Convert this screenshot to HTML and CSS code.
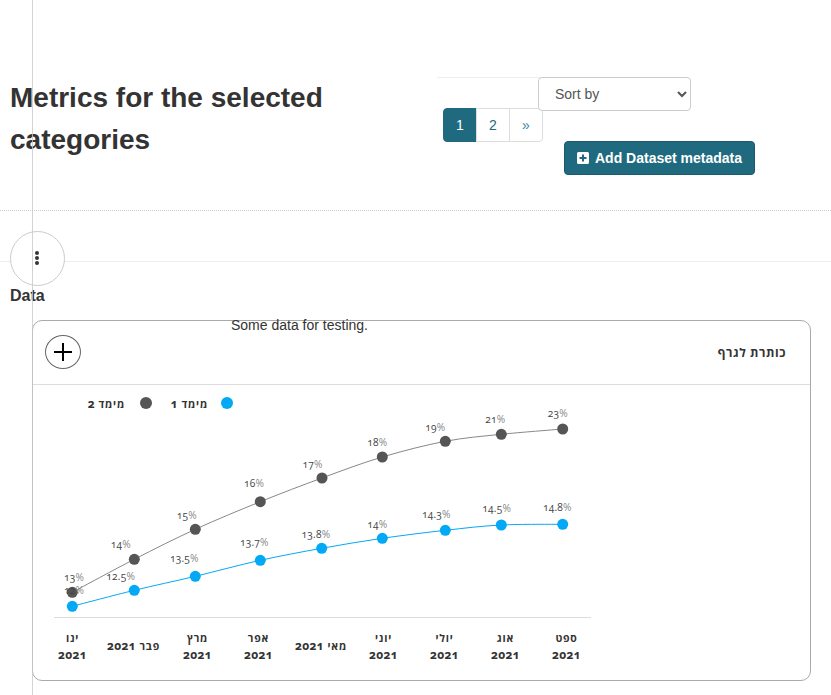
FILE: index.html
```html
<!DOCTYPE html>
<html lang="en">
<head>
<meta charset="utf-8">
<title>Metrics</title>
<link rel="stylesheet" href="styles.css">
</head>
<body>
<div class="guide"></div>
<header class="page-head">
  <h1 class="title">Metrics for the selected categories</h1>
  <div class="controls">
    <hr class="rule">
    <select class="sort"><option>Sort by</option></select>
    <ul class="pager">
      <li class="pager-item active">1</li>
      <li class="pager-item">2</li>
      <li class="pager-item next">»</li>
    </ul>
    <button class="add-btn" type="button">
      <svg class="add-icon" viewBox="0 0 12 12" width="12" height="12"><path fill="#fff" fill-rule="evenodd" d="M1.5 0h9A1.5 1.5 0 0 1 12 1.5v9a1.5 1.5 0 0 1-1.5 1.5h-9A1.5 1.5 0 0 1 0 10.500v-9A1.500 1.500 0 0 1 1.500 0zM5 2.500V5H2.500v2H5v2.500h2V7h2.500V5H7V2.500z"/></svg>
      Add Dataset metadata
    </button>
  </div>
</header>
<section class="content">
  <div class="toolbar">
    <button class="menu-btn" type="button">
      <svg viewBox="0 0 6 16" width="6" height="16"><circle cx="3" cy="3" r="2" fill="#333"/><circle cx="3" cy="8" r="2" fill="#333"/><circle cx="3" cy="13" r="2" fill="#333"/></svg>
    </button>
  </div>
  <div class="data-label">Data</div>
  <p class="data-note">Some data for testing.</p>
  <article class="card">
    <div class="card-head">
      <button class="plus-btn" type="button">
        <svg viewBox="0 0 18 18" width="18" height="18"><path d="M9 0v18M0 9h18" stroke="#000" stroke-width="2" fill="none"/></svg>
      </button>
      <div class="card-title" dir="rtl">כותרת לגרף</div>
    </div>
    <svg class="chart" viewBox="33 385 777 295" width="777" height="295">
      <circle cx="227" cy="403" r="6" class="dot-blue"/>
      <text x="208" y="408" class="legend">מימד <tspan class="yr">1</tspan></text>
      <circle cx="146" cy="403" r="6" class="dot-gray"/>
      <text x="125" y="408" class="legend">מימד <tspan class="yr">2</tspan></text>

      <path class="line-gray" d="M72.300 592.300C82.600 586.800 113.800 569.800 134.300 559.300C154.800 548.800 174.300 538.900 195.300 529.300C216.300 519.700 239.200 510.250 260.300 501.700C281.400 493.150 301.700 485.450 322 478C342.300 470.550 361.750 463.100 382.300 457C402.850 450.900 425.470 445.080 445.300 441.300C465.130 437.520 481.730 436.350 501.300 434.300C520.870 432.250 552.500 429.900 562.700 429"/>
      <path class="line-blue" d="M72.300 606.300C82.600 603.600 113.800 595.300 134.300 590.300C154.800 585.300 174.300 581.300 195.300 576.300C216.300 571.300 239.200 564.930 260.300 560.300C281.400 555.670 301.370 551.970 321.700 548.300C342.030 544.630 361.700 541.300 382.300 538.300C402.900 535.300 425.470 532.520 445.300 530.300C465.130 528.080 481.730 526 501.300 525C521.770 524 552.500 524.400 562.700 524.300"/>

      <g class="dot-gray">
        <circle cx="72.300" cy="592.300" r="5.500"/><circle cx="134.300" cy="559.300" r="5.500"/><circle cx="195.300" cy="529.300" r="5.500"/><circle cx="260.300" cy="501.700" r="5.500"/><circle cx="322" cy="478" r="5.500"/><circle cx="382.300" cy="457" r="5.500"/><circle cx="445.300" cy="441.300" r="5.500"/><circle cx="501.300" cy="434.300" r="5.500"/><circle cx="562.700" cy="429" r="5.500"/>
      </g>
      <g class="dot-blue">
        <circle cx="72.300" cy="606.300" r="5.500"/><circle cx="134.300" cy="590.300" r="5.500"/><circle cx="195.300" cy="576.300" r="5.500"/><circle cx="260.300" cy="560.300" r="5.500"/><circle cx="321.700" cy="548.300" r="5.500"/><circle cx="382.300" cy="538.300" r="5.500"/><circle cx="445.300" cy="530.300" r="5.500"/><circle cx="501.300" cy="525" r="5.500"/><circle cx="562.700" cy="524.300" r="5.500"/>
      </g>

      <g class="values">
        <text x="74" y="580.500">13<tspan class="pct">%</tspan></text>
        <text x="74" y="594">12<tspan class="pct">%</tspan></text>
        <text x="120.700" y="547.500">14<tspan class="pct">%</tspan></text>
        <text x="186.700" y="518.500">15<tspan class="pct">%</tspan></text>
        <text x="254" y="487">16<tspan class="pct">%</tspan></text>
        <text x="312.500" y="468">17<tspan class="pct">%</tspan></text>
        <text x="377.300" y="446">18<tspan class="pct">%</tspan></text>
        <text x="435.300" y="430.500">19<tspan class="pct">%</tspan></text>
        <text x="495.300" y="423">21<tspan class="pct">%</tspan></text>
        <text x="557.700" y="417">23<tspan class="pct">%</tspan></text>
        <text x="120.700" y="580">12.5<tspan class="pct">%</tspan></text>
        <text x="184.300" y="561.500">13.5<tspan class="pct">%</tspan></text>
        <text x="254.300" y="545.500">13.7<tspan class="pct">%</tspan></text>
        <text x="316" y="538">13.8<tspan class="pct">%</tspan></text>
        <text x="377.300" y="527.500">14<tspan class="pct">%</tspan></text>
        <text x="436.300" y="517.500">14.3<tspan class="pct">%</tspan></text>
        <text x="496.700" y="511.500">14.5<tspan class="pct">%</tspan></text>
        <text x="557.300" y="511">14.8<tspan class="pct">%</tspan></text>
      </g>

      <line class="axis" x1="54" y1="617.500" x2="591" y2="617.500"/>

      <g class="ticks">
        <text x="72.500" y="642">ינו</text><text x="72.500" y="659" class="yr">2021</text>
        <text x="133.500" y="650">פבר <tspan class="yr">2021</tspan></text>
        <text x="197.500" y="642">מרץ</text><text x="197.500" y="659" class="yr">2021</text>
        <text x="258.500" y="642">אפר</text><text x="258.500" y="659" class="yr">2021</text>
        <text x="321" y="650">מאי <tspan class="yr">2021</tspan></text>
        <text x="383.500" y="642">יוני</text><text x="383.500" y="659" class="yr">2021</text>
        <text x="444.500" y="642">יולי</text><text x="444.500" y="659" class="yr">2021</text>
        <text x="505.500" y="642">אוג</text><text x="505.500" y="659" class="yr">2021</text>
        <text x="566.500" y="642">ספט</text><text x="566.500" y="659" class="yr">2021</text>
      </g>
    </svg>
  </article>
</section>
</body>
</html>
```

FILE: styles.css
```css
* { box-sizing: border-box; }
html, body { margin: 0; padding: 0; }
body {
  position: relative;
  height: 695px;
  overflow: hidden;
  background: #fff;
  color: #333;
  font-family: "Liberation Sans", Arial, sans-serif;
  font-size: 14px;
}
.guide {
  position: absolute;
  top: 0;
  bottom: 0;
  left: 32px;
  width: 1px;
  background: rgba(200, 200, 200, 0.8);
  z-index: 5;
}
.page-head {
  display: flex;
  height: 211px;
  border-bottom: 1px dotted #ccc;
}
.title {
  width: 437px;
  margin: 0;
  padding: 77px 0 0 10px;
  font-size: 28px;
  line-height: 42px;
  font-weight: 700;
  color: #333;
}
.controls {
  display: flex;
  flex-direction: column;
  align-items: flex-start;
  padding-top: 77px;
}
.rule {
  width: 110px;
  height: 1px;
  margin: 0 0 -1px;
  border: 0;
  background: #eee;
}
.sort {
  position: relative;
  z-index: 2;
  width: 153px;
  height: 34px;
  margin-left: 101px;
  padding: 6px 12px;
  border: 1px solid #ccc;
  border-radius: 4px;
  background: #fff;
  color: #555;
  font-family: inherit;
  font-size: 14px;
}
.pager {
  display: flex;
  height: 34px;
  margin: -3px 0 0 6px;
  padding: 0;
  list-style: none;
}
.pager-item {
  width: 34px;
  margin-left: -1px;
  border: 1px solid #ddd;
  background: #fff;
  color: #206a80;
  font-size: 14px;
  line-height: 32px;
  text-align: center;
}
.pager-item:first-child { width: 34px; margin-left: 0; border-radius: 4px 0 0 4px; }
.pager-item.next { width: 34px; border-radius: 0 4px 4px 0; color: #3a87a8; }
.pager-item.active { border-color: #206a80; background: #206a80; color: #fff; }
.add-btn {
  display: flex;
  align-items: center;
  gap: 6px;
  width: 191px;
  height: 34px;
  margin: -1px 0 0 127px;
  padding: 0 0 0 12px;
  border: 1px solid #1b5a6d;
  border-radius: 4px;
  background: #206a80;
  color: #fff;
  font-family: inherit;
  font-size: 14px;
  font-weight: 700;
  white-space: nowrap;
}
.toolbar {
  height: 51px;
  border-bottom: 1px solid #eee;
  padding: 20px 0 0 10px;
}
.menu-btn {
  display: flex;
  align-items: center;
  justify-content: center;
  position: relative;
  width: 55px;
  height: 55px;
  padding: 0 1px 1px 0;
  border: 1px solid #ccc;
  border-radius: 50%;
  background: #fff;
}
.data-label {
  margin: 23px 0 0 10px;
  font-size: 16px;
  line-height: 22px;
  font-weight: 700;
  color: #333;
}
.data-note {
  position: relative;
  z-index: 2;
  margin: 8px 0 0 231px;
  font-size: 14px;
  line-height: 20px;
  color: #333;
}
.card {
  width: 779px;
  height: 361px;
  margin: -15px 0 0 32px;
  border: 1px solid #aaa;
  border-radius: 10px;
  background: #fff;
}
.card-head {
  display: flex;
  align-items: center;
  justify-content: space-between;
  height: 64px;
  padding: 0 24px 1px 12px;
  border-bottom: 1px solid #ddd;
}
.plus-btn {
  display: flex;
  align-items: center;
  justify-content: center;
  width: 36px;
  height: 34px;
  padding: 0;
  border: 1px solid #666;
  border-radius: 50%;
  background: #fff;
}
.card-title {
  font-family: "Open Sans", "Liberation Sans", sans-serif;
  font-size: 12px;
  font-weight: 700;
  letter-spacing: 0.6px;
  color: #333;
}
.chart { display: block; }
.legend, .ticks text {
  font-family: "Open Sans", "DejaVu Sans", sans-serif;
  font-size: 10.500px;
  font-weight: 700;
  fill: #333;
  letter-spacing: 0.8px;
  direction: rtl;
  font-variant-numeric: oldstyle-nums;
}
.legend { text-anchor: start; }
.ticks text { text-anchor: middle; }
.ticks .yr, .legend .yr {
  font-size: 12px;
  letter-spacing: 0.3px;
}
.values text {
  font-family: "Open Sans", "DejaVu Sans", sans-serif;
  font-size: 10.200px;
  fill: #444;
  text-anchor: middle;
  letter-spacing: 0.2px;
  font-variant-numeric: oldstyle-nums;
}
.pct { fill: #888; }
.dot-gray { fill: #555; }
.dot-blue { fill: #03a9f4; }
.line-gray { fill: none; stroke: #888; stroke-width: 1; }
.line-blue { fill: none; stroke: #03a9f4; stroke-width: 1; }
.axis { stroke: #ddd; stroke-width: 1; }
```
